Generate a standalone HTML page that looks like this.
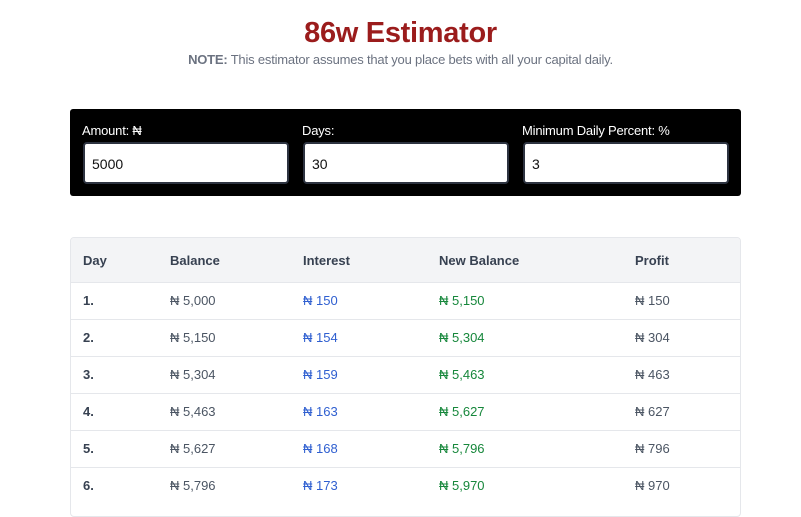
<!DOCTYPE html>
<html><head><meta charset="utf-8"><style>
*{box-sizing:border-box;margin:0;padding:0}
body{width:801px;height:503px;overflow:hidden;background:#fff;font-family:"Liberation Sans",Arial,sans-serif;}
h1{position:absolute;top:17px;left:0;width:801px;text-align:center;font-size:29px;color:#9b1c1c;font-weight:bold;letter-spacing:-0.3px}
.note{position:absolute;top:52px;left:0;width:801px;text-align:center;font-size:13px;color:#6b7280;letter-spacing:-0.2px}
.note b{color:#6b7280}
.box{position:absolute;left:70px;top:109px;width:671px;height:87px;background:#000;border-radius:3px}
.lab{position:absolute;top:14px;color:#fff;font-size:13px;letter-spacing:-0.2px}
.inp{position:absolute;top:33px;width:206px;height:42px;background:#fff;border:2px solid #2d3340;border-radius:4px;font-size:14px;padding:12px 0 0 7px;color:#111}
.tbl{position:absolute;left:70px;top:237px;width:671px;height:280px;border:1px solid #e5e7eb;border-radius:4px;overflow:hidden}
.row{position:absolute;left:0;width:671px;height:37px;border-top:1px solid #e5e7eb;font-size:13px}
.row span{position:absolute;top:10px}
.hd{top:0;height:44px;background:#f3f4f6;border-top:none;font-weight:bold;color:#374151}
.hd span{top:15px}
.c1{left:12px}.c2{left:99px}.c3{left:232px}.c4{left:368px}.c5{left:564px}
.g{color:#4b5563}.bl{color:#2f5fd0}.gr{color:#16873b}.d{font-weight:bold;color:#374151}
</style></head><body>
<h1>86w Estimator</h1>
<div class="note"><b>NOTE:</b> This estimator assumes that you place bets with all your capital daily.</div>
<div class="box">
<div class="lab" style="left:12px">Amount: ₦</div>
<div class="lab" style="left:232px">Days:</div>
<div class="lab" style="left:452px">Minimum Daily Percent: %</div>
<div class="inp" style="left:13px">5000</div>
<div class="inp" style="left:233px">30</div>
<div class="inp" style="left:453px">3</div>
</div>
<div class="tbl">
<div class="row hd"><span class="c1">Day</span><span class="c2">Balance</span><span class="c3">Interest</span><span class="c4">New Balance</span><span class="c5">Profit</span></div>
<div class="row" style="top:44px"><span class="c1 d">1.</span><span class="c2 g">₦ 5,000</span><span class="c3 bl">₦ 150</span><span class="c4 gr">₦ 5,150</span><span class="c5 g">₦ 150</span></div>
<div class="row" style="top:81px"><span class="c1 d">2.</span><span class="c2 g">₦ 5,150</span><span class="c3 bl">₦ 154</span><span class="c4 gr">₦ 5,304</span><span class="c5 g">₦ 304</span></div>
<div class="row" style="top:118px"><span class="c1 d">3.</span><span class="c2 g">₦ 5,304</span><span class="c3 bl">₦ 159</span><span class="c4 gr">₦ 5,463</span><span class="c5 g">₦ 463</span></div>
<div class="row" style="top:155px"><span class="c1 d">4.</span><span class="c2 g">₦ 5,463</span><span class="c3 bl">₦ 163</span><span class="c4 gr">₦ 5,627</span><span class="c5 g">₦ 627</span></div>
<div class="row" style="top:192px"><span class="c1 d">5.</span><span class="c2 g">₦ 5,627</span><span class="c3 bl">₦ 168</span><span class="c4 gr">₦ 5,796</span><span class="c5 g">₦ 796</span></div>
<div class="row" style="top:229px"><span class="c1 d">6.</span><span class="c2 g">₦ 5,796</span><span class="c3 bl">₦ 173</span><span class="c4 gr">₦ 5,970</span><span class="c5 g">₦ 970</span></div>
</div>
</body></html>
